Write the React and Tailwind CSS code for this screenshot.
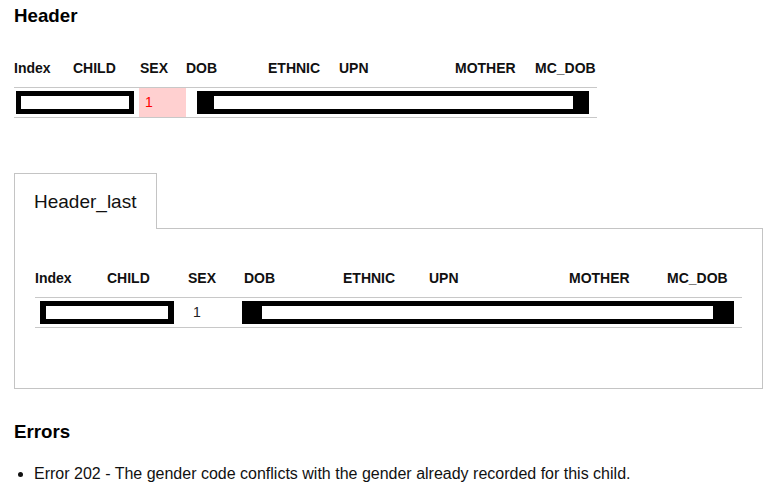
import React from "react";

const font = { fontFamily: '"Liberation Sans", Arial, sans-serif' };

function HeaderRow({ cols }) {
  return (
    <div className="flex h-[32px] border-b border-[#c8c8c8] text-[14px] font-bold leading-[24px] text-[#111]">
      {cols.map(([label, w]) => (
        <div key={label} style={{ width: w }} className="shrink-0">
          {label}
        </div>
      ))}
    </div>
  );
}

export default function App() {
  const cols1 = [
    ["Index", 59],
    ["CHILD", 67],
    ["SEX", 46],
    ["DOB", 82],
    ["ETHNIC", 71],
    ["UPN", 116],
    ["MOTHER", 80],
    ["MC_DOB", 62],
  ];
  const cols2 = [
    ["Index", 72],
    ["CHILD", 81],
    ["SEX", 56],
    ["DOB", 99],
    ["ETHNIC", 86],
    ["UPN", 140],
    ["MOTHER", 98],
    ["MC_DOB", 75],
  ];
  return (
    <div className="min-h-[493px] w-[773px] bg-white px-[14px] text-black" style={font}>
      <h3 className="pt-[5px] text-[18.72px] font-bold leading-[22px]">Header</h3>

      <div className="mt-[29px] w-[583px]">
        <HeaderRow cols={cols1} />
        <div className="flex h-[30px] items-start border-b border-[#c8c8c8]">
          <div className="ml-[2px] mt-[3px] h-[23px] w-[118px] shrink-0 border-[5px] border-black bg-white" />
          <div className="ml-[5px] h-[29px] w-[47px] shrink-0 bg-[#ffd0d0] pl-[6px] text-[14px] leading-[29px] text-[#ff0000]">
            1
          </div>
          <div className="ml-[11px] mt-[3px] h-[23px] w-[392px] shrink-0 border-y-[5px] border-l-[17px] border-r-[16px] border-black bg-white" />
        </div>
      </div>

      <div className="mt-[55px] w-[749px]">
        <div className="relative z-10 -mb-px flex h-[56px] w-[143px] items-center border-x border-t border-[#c4c4c4] bg-white pl-[19px] text-[19px] leading-[24px] text-[#111]">
          Header_last
        </div>
        <div className="h-[161px] border border-[#c4c4c4] pl-[20px] pt-[37px]">
          <div className="w-[707px]">
            <HeaderRow cols={cols2} />
            <div className="flex h-[30px] items-start border-b border-[#c8c8c8]">
              <div className="ml-[5px] mt-[3px] h-[23px] w-[134px] shrink-0 border-x-[6px] border-y-[5px] border-black bg-white" />
              <div className="h-[29px] w-[68px] shrink-0 pl-[19px] text-[14px] leading-[29px] text-[#222]">1</div>
              <div className="mt-[3px] h-[23px] w-[492px] shrink-0 border-y-[5px] border-l-[20px] border-r-[21px] border-black bg-white" />
            </div>
          </div>
        </div>
      </div>

      <h3 className="mt-[32px] text-[18.72px] font-bold leading-[22px]">Errors</h3>
      <ul className="mt-[22px] list-disc pl-[20px] text-[16px] leading-[18px] text-[#111]">
        <li>Error 202 - The gender code conflicts with the gender already recorded for this child.</li>
      </ul>
    </div>
  );
}
